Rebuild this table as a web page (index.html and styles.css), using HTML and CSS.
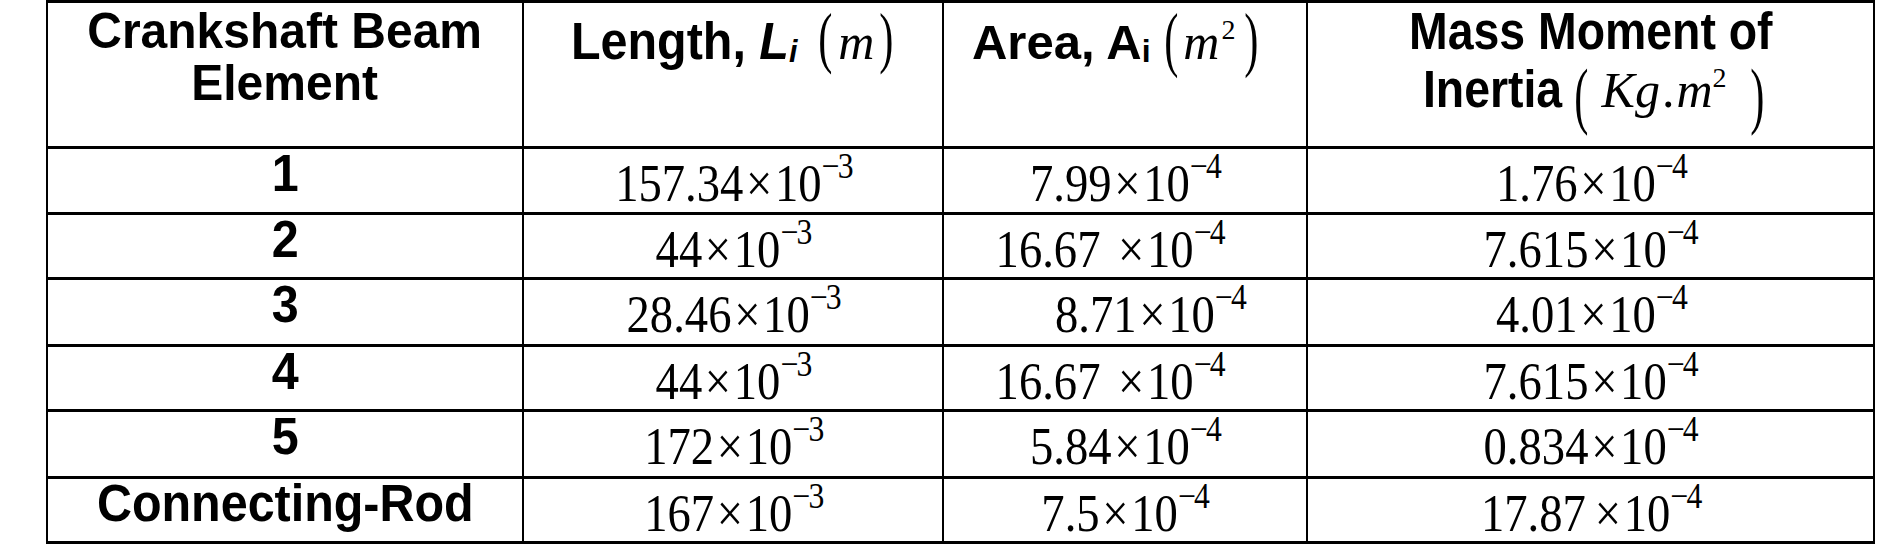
FILE: index.html
```html
<!DOCTYPE html>
<html>
<head>
<meta charset="utf-8">
<link rel="stylesheet" href="styles.css">
</head>
<body>
<table class="tbl">
  <colgroup>
    <col class="c1"><col class="c2"><col class="c3"><col class="c4">
  </colgroup>
  <thead>
    <tr class="hdr">
      <th class="h1"><span class="t">Crankshaft Beam<br>Element</span></th>
      <th class="h2"><span class="t">Length, <span class="sym">L<sub>i</sub></span></span><span class="unit u2"><span class="paren">(</span><i>m</i><span class="paren">)</span></span></th>
      <th class="h3"><span class="ar">Area, <span class="symu">A<sub>i</sub></span></span><span class="unit u3"><span class="paren">(</span><i>m</i><sup>2</sup><span class="paren">)</span></span></th>
      <th class="h4"><span class="t">Mass Moment of</span><br><span class="t">Inertia</span><span class="unit u4"><span class="paren pl">(</span><i>Kg</i>.<i>m</i><sup>2</sup><span class="paren pr">)</span></span></th>
    </tr>
  </thead>
  <tbody>
    <tr class="r1">
      <td class="lbl"><span class="t">1</span></td>
      <td class="num"><span class="v">157.34<span class="x">×</span>10<sup>−3</sup></span></td>
      <td class="num"><span class="v">7.99<span class="x">×</span>10<sup>−4</sup></span></td>
      <td class="num"><span class="v">1.76<span class="x">×</span>10<sup>−4</sup></span></td>
    </tr>
    <tr class="r2">
      <td class="lbl"><span class="t">2</span></td>
      <td class="num"><span class="v">44<span class="x">×</span>10<sup>−3</sup></span></td>
      <td class="num wide"><span class="v">16.67<span class="x wgap">×</span>10<sup>−4</sup></span></td>
      <td class="num"><span class="v">7.615<span class="x">×</span>10<sup>−4</sup></span></td>
    </tr>
    <tr class="r3">
      <td class="lbl"><span class="t">3</span></td>
      <td class="num"><span class="v">28.46<span class="x">×</span>10<sup>−3</sup></span></td>
      <td class="num shift"><span class="v">8.71<span class="x">×</span>10<sup>−4</sup></span></td>
      <td class="num"><span class="v">4.01<span class="x">×</span>10<sup>−4</sup></span></td>
    </tr>
    <tr class="r4">
      <td class="lbl"><span class="t">4</span></td>
      <td class="num"><span class="v">44<span class="x">×</span>10<sup>−3</sup></span></td>
      <td class="num wide"><span class="v">16.67<span class="x wgap">×</span>10<sup>−4</sup></span></td>
      <td class="num"><span class="v">7.615<span class="x">×</span>10<sup>−4</sup></span></td>
    </tr>
    <tr class="r5">
      <td class="lbl"><span class="t">5</span></td>
      <td class="num"><span class="v">172<span class="x">×</span>10<sup>−3</sup></span></td>
      <td class="num"><span class="v">5.84<span class="x">×</span>10<sup>−4</sup></span></td>
      <td class="num"><span class="v">0.834<span class="x">×</span>10<sup>−4</sup></span></td>
    </tr>
    <tr class="r6">
      <td class="lbl"><span class="t">Connecting-Rod</span></td>
      <td class="num"><span class="v">167<span class="x">×</span>10<sup>−3</sup></span></td>
      <td class="num"><span class="v">7.5<span class="x">×</span>10<sup>−4</sup></span></td>
      <td class="num"><span class="v">17.87<span class="x gap">×</span>10<sup>−4</sup></span></td>
    </tr>
  </tbody>
</table>
</body>
</html>
```

FILE: styles.css
```css
body {
  margin: 0;
  background: #ffffff;
}

.tbl {
  border-collapse: collapse;
  table-layout: fixed;
  width: 1829px;
  margin-left: 46px;
  margin-top: 0;
  color: #000;
}

.c1 { width: 476px; }
.c2 { width: 420px; }
.c3 { width: 364px; }
.c4 { width: 567px; }

.tbl th,
.tbl td {
  border-style: solid;
  border-color: #000;
  border-width: 3px 2px;
  padding: 0;
  text-align: center;
  vertical-align: top;
}

.hdr { height: 146px; }
.r1 { height: 66px; }
.r2 { height: 65px; }
.r3 { height: 67px; }
.r4 { height: 65px; }
.r5 { height: 67px; }
.r6 { height: 65px; }

/* condensed look of the scanned table */
.t {
  display: inline-block;
  transform: scaleX(0.91);
}

.v {
  display: inline-block;
  transform: scaleX(0.88);
}

.tbl th {
  font-family: "Liberation Sans", Arial, sans-serif;
  font-weight: bold;
  font-size: 51px;
  line-height: 56px;
  padding-top: 0;
  white-space: nowrap;
}

.tbl th.h1 {
  font-size: 50px;
  line-height: 52px;
  padding-top: 2px;
}

.h1 .t {
  transform: scaleX(0.96);
}

.tbl th.h2 {
  padding-top: 11px;
  padding-right: 6px;
}

.h2 .t {
  transform: scaleX(0.95);
}

.tbl th.h3 {
  font-size: 49px;
  padding-top: 11px;
  padding-right: 18px;
}

.tbl th.h4 {
  line-height: 58px;
  padding-top: 0;
}

.sym {
  font-style: italic;
}

.sym sub,
.symu sub {
  font-size: 32px;
  line-height: 0;
  vertical-align: -3px;
}

.unit {
  font-family: "Liberation Serif", "Times New Roman", serif;
  font-weight: normal;
  font-size: 50px;
}

.u2 { margin-left: 14px; }
.u3 { margin-left: 12px; }
.u4 { margin-left: 4px; }

.unit i {
  font-style: italic;
  margin: 0 4px;
}

.unit sup {
  font-size: 28px;
  line-height: 0;
  vertical-align: 20px;
  margin-left: -2px;
  margin-right: 8px;
}

.u4 i {
  margin: 0 2px;
}

.u4 .pl {
  margin-right: 10px;
}

.u4 .pr {
  margin-left: 14px;
}

.paren {
  display: inline-block;
  line-height: 1;
}

.u2 .paren {
  transform: translateY(-5px) scale(0.85, 1.36);
}

.u3 .paren {
  transform: translateY(-4px) scale(0.85, 1.45);
}

.u4 .paren {
  transform: translateY(4px) scale(0.85, 1.5);
}

.tbl td.lbl {
  font-family: "Liberation Sans", Arial, sans-serif;
  font-weight: bold;
  font-size: 51px;
  line-height: 46px;
  padding-top: 2px;
}

.lbl .t {
  transform: scaleX(0.95);
}

.tbl td.num {
  font-family: "Liberation Serif", "Times New Roman", serif;
  font-size: 53px;
  line-height: 52px;
  padding-top: 8px;
}

.num .x {
  margin: 0 3px;
}

.num .x.gap {
  margin-left: 10px;
}

.num .x.wgap {
  margin-left: 20px;
}

.num sup {
  font-size: 36px;
  line-height: 0;
  vertical-align: 23px;
  letter-spacing: -2px;
}

.tbl td.shift {
  padding-left: 50px;
}

.tbl td.wide {
  padding-right: 30px;
}
```
